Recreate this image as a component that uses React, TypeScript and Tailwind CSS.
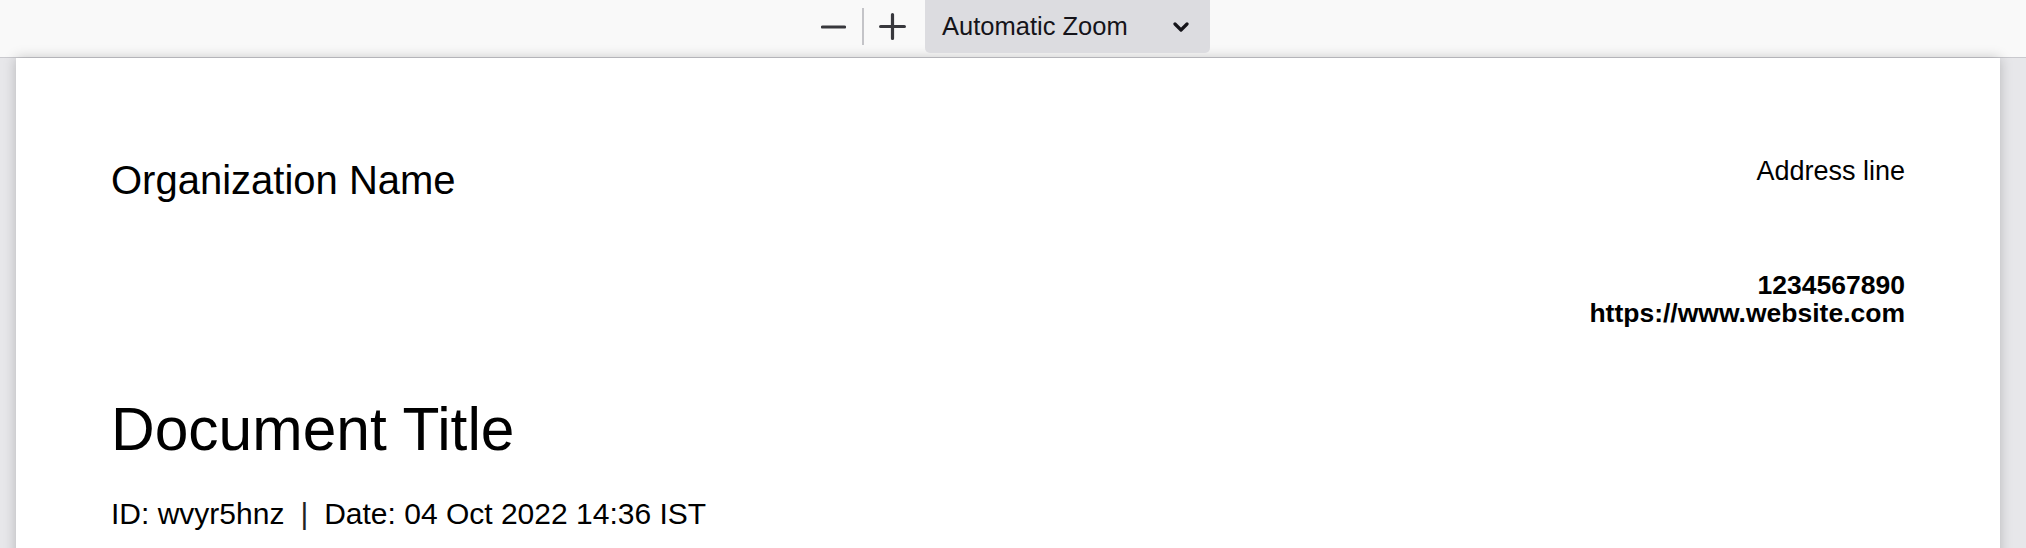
import React from 'react';

const ZoomOutIcon = () => (
  <svg width="25" height="26" viewBox="0 0 25 26" fill="none">
    <path d="M1.5 13h22" stroke="#38383d" strokeWidth="3.2" strokeLinecap="round" />
  </svg>
);

const ZoomInIcon = () => (
  <svg width="27" height="27" viewBox="0 0 27 27" fill="none">
    <path d="M1.6 13.5h23.8M13.5 1.6v23.8" stroke="#38383d" strokeWidth="3.2" strokeLinecap="round" />
  </svg>
);

const Chevron = () => (
  <svg width="16" height="10" viewBox="0 0 16 10" fill="none">
    <path d="M2 2l6 6 6-6" stroke="#15141a" strokeWidth="3.2" strokeLinecap="round" strokeLinejoin="round" />
  </svg>
);

const Toolbar = () => (
  <div className="h-[58px] bg-[#f9f9f9] border-b border-[#c9c9ce] flex justify-center items-start">
    <div className="flex items-start pl-[5px]">
      <button className="w-[25px] h-[53px] flex items-center justify-center">
        <ZoomOutIcon />
      </button>
      <div className="w-[2px] h-[37px] mt-[8px] ml-[16px] bg-[#c4c4c8]" />
      <button className="w-[27px] h-[53px] ml-[15px] flex items-center justify-center">
        <ZoomInIcon />
      </button>
      <div className="w-[285px] h-[53px] ml-[19px] bg-[#dcdce0] rounded-b-[5px] flex items-center justify-between pl-[17px] pr-[21px]">
        <span className="text-[25.5px] text-[#15141a] leading-none">Automatic Zoom</span>
        <Chevron />
      </div>
    </div>
  </div>
);

export default function App() {
  return (
    <div className="w-[2026px] h-[548px] overflow-hidden bg-[#e7e7ea] font-['Liberation_Sans',Arial,sans-serif]">
      <Toolbar />
      <div className="pl-[16px] pr-[26px] pb-8">
        <div className="bg-white shadow-[0_0_12px_rgba(0,0,0,0.22)] px-[95px] pt-[100px] pb-20 text-black">
          {/* Header */}
          <div className="flex justify-between items-start">
            <div className="text-[40px] leading-none mt-[2px]">Organization Name</div>
            <div className="text-right">
              <div className="text-[27px] leading-none">Address line</div>
              <div className="mt-[86px] text-[26.5px] leading-[28px] font-bold">
                <div>1234567890</div>
                <div>https://www.website.com</div>
              </div>
            </div>
          </div>

          {/* Title */}
          <h1 className="mt-[72px] text-[60.5px] leading-none">Document Title</h1>
          <div className="mt-[39px] text-[30px] leading-none">
            ID: wvyr5hnz<span className="mx-[16px] text-[#222]">|</span>Date: 04 Oct 2022 14:36 IST
          </div>
        </div>
      </div>
    </div>
  );
}
